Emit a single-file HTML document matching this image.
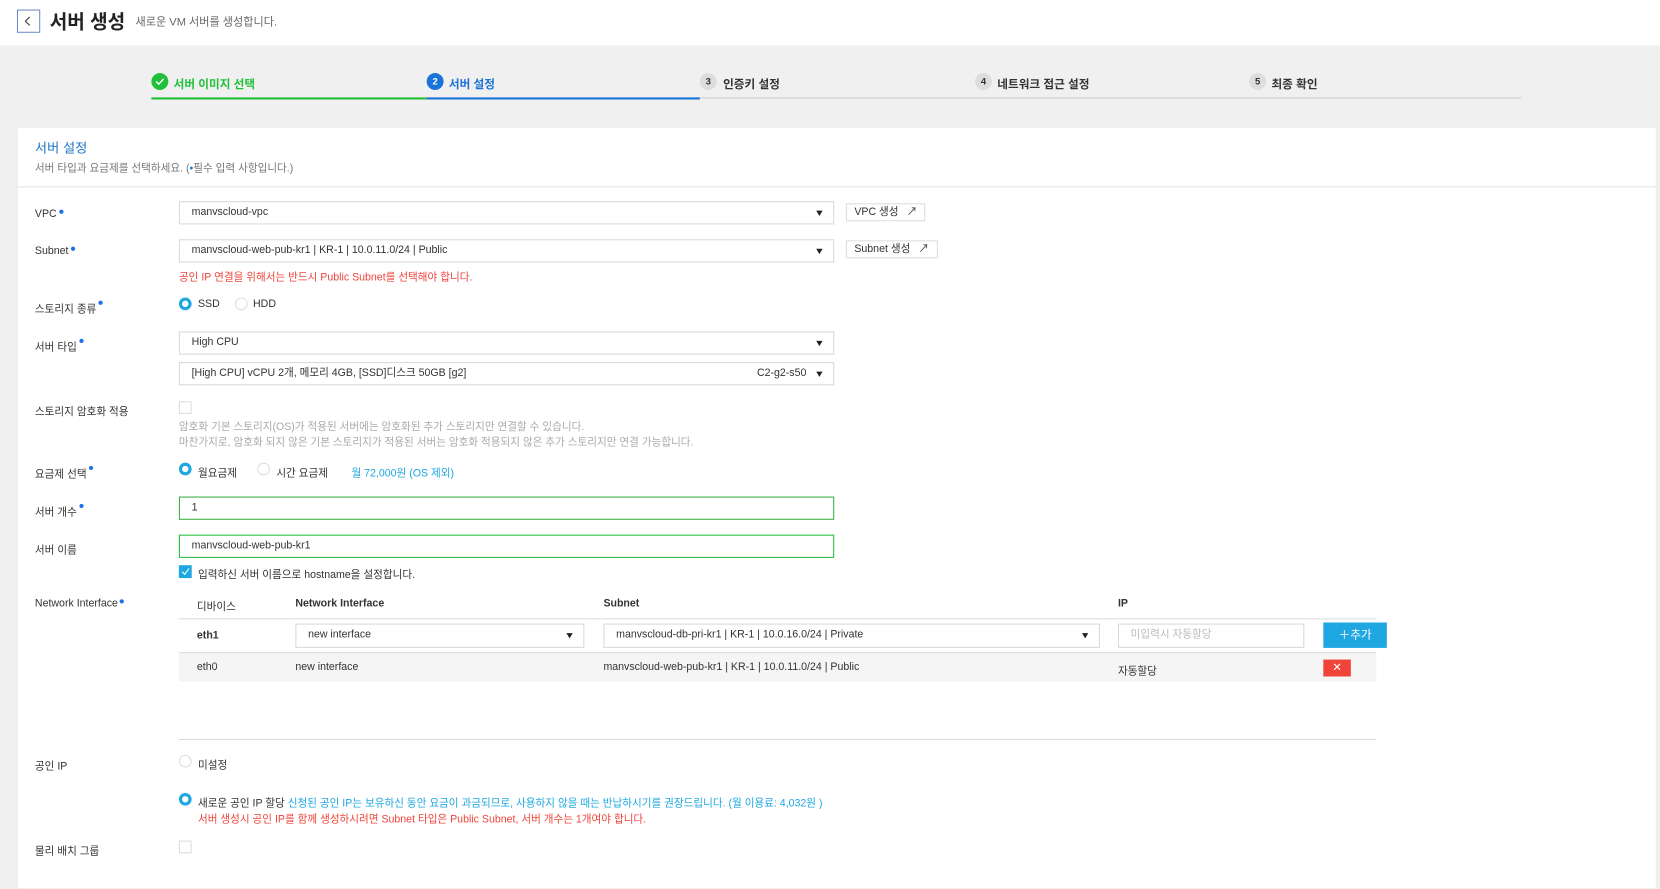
<!DOCTYPE html>
<html><head><meta charset="utf-8"><style>
*{margin:0;padding:0;box-sizing:border-box}
html,body{width:1660px;height:872px;overflow:hidden;background:#f0f0f0}
#w{position:absolute;left:0;top:0;width:1568px;height:824px;transform:scale(1.05867);transform-origin:0 0;font-family:"Liberation Sans","Noto Sans CJK KR",sans-serif;font-size:10px;color:#333}
.a{position:absolute;white-space:nowrap}
.sel{position:absolute;border:1px solid #d9d9d9;background:#fff;height:22px;line-height:20px;padding-left:11px;color:#333}
.sel.ar:after{content:"";position:absolute;right:10px;top:8px;border-left:3.5px solid transparent;border-right:3.5px solid transparent;border-top:5px solid #222}
.dot:after{content:"";display:inline-block;width:4px;height:4px;border-radius:50%;background:#1a73e8;vertical-align:top;margin:1px 0 0 2px}
.rad{position:absolute;width:12px;height:12px;border-radius:50%;border:1px solid #ddd;background:#fff}
.rad.on{border:3.5px solid #1ea7e1}
.chk{position:absolute;width:12px;height:12px;border:1px solid #ddd;background:#fff}
.btn{position:absolute;border:1px solid #ddd;background:#fff;height:17px;line-height:15px;padding-left:7px;font-size:10px}
.circ{position:absolute;width:16px;height:16px;border-radius:50%;background:#ddd;color:#333;font-size:9px;text-align:center;line-height:16px;font-weight:bold}
.st{position:absolute;font-size:11px;font-weight:bold;color:#333}
.lb{position:absolute;left:33px}
</style></head><body><div id="w">
<div class="a" style="left:0;top:0;width:1568px;height:43px;background:#fff"></div>
<div class="a" style="left:16px;top:9px;width:22px;height:22px;border:1px solid #6f8dc6;background:#fff"></div>
<svg class="a" style="left:21px;top:14px" width="12" height="12"><path d="M7 2 L3 6 L7 10" stroke="#333" fill="none" stroke-width="1"/></svg>
<div class="a" style="left:47px;top:7px;font-size:18px;font-weight:bold;color:#222">서버 생성</div>
<div class="a" style="left:128px;top:13px;font-size:10.5px;color:#666">새로운 VM 서버를 생성합니다.</div>

<div class="a" style="left:143px;top:92px;width:1294px;height:1px;background:#ccc"></div>
<div class="a" style="left:143px;top:92px;width:260px;height:2px;background:#22c03a"></div>
<div class="a" style="left:403px;top:92px;width:258px;height:2px;background:#1a73d8"></div>
<div class="circ" style="left:143px;top:69px;background:#22c03a"></div>
<svg class="a" style="left:146px;top:72px" width="10" height="10"><path d="M1.5 5 L4 7.5 L8.5 2.5" stroke="#fff" fill="none" stroke-width="1.3"/></svg>
<div class="st" style="left:164px;top:71px;color:#22c03a">서버 이미지 선택</div>
<div class="circ" style="left:403px;top:69px;background:#1a73d8;color:#fff">2</div>
<div class="st" style="left:424px;top:71px;color:#1a73d8">서버 설정</div>
<div class="circ" style="left:661px;top:69px">3</div>
<div class="st" style="left:683px;top:71px">인증키 설정</div>
<div class="circ" style="left:921px;top:69px">4</div>
<div class="st" style="left:942px;top:71px">네트워크 접근 설정</div>
<div class="circ" style="left:1180px;top:69px">5</div>
<div class="st" style="left:1201px;top:71px">최종 확인</div>

<div class="a" style="left:16px;top:120px;width:1549px;height:720px;background:#fff;border:1px solid #eee"></div>
<div class="a" style="left:33px;top:129px;font-size:12.5px;color:#1a73c8">서버 설정</div>
<div class="a" style="left:33px;top:150px;color:#777">서버 타입과 요금제를 선택하세요. (<span style="color:#1a73e8">•</span>필수 입력 사항입니다.)</div>
<div class="a" style="left:16px;top:176px;width:1549px;height:1px;background:#e3e3e3"></div>

<div class="lb dot" style="top:197px">VPC</div>
<div class="sel ar" style="left:169px;top:190px;width:619px">manvscloud-vpc</div>
<div class="btn" style="left:799px;top:192px;width:75px">VPC 생성 <span style="margin-left:5px">↗</span></div>
<div class="lb dot" style="top:232px">Subnet</div>
<div class="sel ar" style="left:169px;top:226px;width:619px">manvscloud-web-pub-kr1 | KR-1 | 10.0.11.0/24 | Public</div>
<div class="btn" style="left:799px;top:227px;width:87px">Subnet 생성 <span style="margin-left:5px">↗</span></div>
<div class="a" style="left:169px;top:253px;color:#f0433a">공인 IP 연결을 위해서는 반드시 Public Subnet를 선택해야 합니다.</div>

<div class="lb dot" style="top:283px">스토리지 종류</div>
<div class="rad on" style="left:169px;top:281px"></div><div class="a" style="left:187px;top:282px">SSD</div>
<div class="rad" style="left:222px;top:281px"></div><div class="a" style="left:239px;top:282px">HDD</div>

<div class="lb dot" style="top:319px">서버 타입</div>
<div class="sel ar" style="left:169px;top:313px;width:619px">High CPU</div>
<div class="sel ar" style="left:169px;top:342px;width:619px">[High CPU] vCPU 2개, 메모리 4GB, [SSD]디스크 50GB [g2]<span style="position:absolute;left:545px">C2-g2-s50</span></div>

<div class="lb" style="top:380px">스토리지 암호화 적용</div>
<div class="chk" style="left:169px;top:379px"></div>
<div class="a" style="left:169px;top:394px;color:#aaa">암호화 기본 스토리지(OS)가 적용된 서버에는 암호화된 추가 스토리지만 연결할 수 있습니다.</div>
<div class="a" style="left:169px;top:409px;color:#aaa">마찬가지로, 암호화 되지 않은 기본 스토리지가 적용된 서버는 암호화 적용되지 않은 추가 스토리지만 연결 가능합니다.</div>

<div class="lb dot" style="top:439px">요금제 선택</div>
<div class="rad on" style="left:169px;top:437px"></div><div class="a" style="left:187px;top:438px">월요금제</div>
<div class="rad" style="left:243px;top:437px"></div><div class="a" style="left:261px;top:438px">시간 요금제</div>
<div class="a" style="left:332px;top:438px;color:#1ea7e1">월 72,000원 (OS 제외)</div>

<div class="lb dot" style="top:475px">서버 개수</div>
<div class="sel" style="left:169px;top:469px;width:619px;border-color:#3cb043">1</div>
<div class="lb" style="top:511px">서버 이름</div>
<div class="sel" style="left:169px;top:505px;width:619px;border-color:#22c03a">manvscloud-web-pub-kr1</div>
<div class="chk" style="left:169px;top:534px;background:#1ea7e1;border-color:#1ea7e1"></div>
<svg class="a" style="left:170px;top:535px" width="10" height="10"><path d="M2 5 L4.5 7.5 L8.5 2" stroke="#fff" fill="none" stroke-width="1"/></svg>
<div class="a" style="left:187px;top:534px">입력하신 서버 이름으로 hostname을 설정합니다.</div>

<div class="lb dot" style="top:565px">Network Interface</div>
<div class="a" style="left:186px;top:564px">디바이스</div>
<div class="a" style="left:279px;top:565px;font-weight:bold">Network Interface</div>
<div class="a" style="left:570px;top:565px;font-weight:bold">Subnet</div>
<div class="a" style="left:1056px;top:565px;font-weight:bold">IP</div>
<div class="a" style="left:169px;top:584px;width:1131px;height:1px;background:#ddd"></div>
<div class="a" style="left:186px;top:595px;font-weight:bold">eth1</div>
<div class="sel ar" style="left:279px;top:589px;width:273px;height:23px">new interface</div>
<div class="sel ar" style="left:570px;top:589px;width:469px;height:23px">manvscloud-db-pri-kr1 | KR-1 | 10.0.16.0/24 | Private</div>
<div class="sel" style="left:1056px;top:589px;width:176px;height:23px;color:#bbb">미입력시 자동할당</div>
<div class="a" style="left:1250px;top:588px;width:60px;height:24px;background:#1ea7e1;color:#fff;font-size:11px;text-align:center;line-height:24px">＋추가</div>
<div class="a" style="left:169px;top:616px;width:1131px;height:28px;background:#f5f5f5;border-top:1px solid #ddd"></div>
<div class="a" style="left:186px;top:625px">eth0</div>
<div class="a" style="left:279px;top:625px">new interface</div>
<div class="a" style="left:570px;top:625px">manvscloud-web-pub-kr1 | KR-1 | 10.0.11.0/24 | Public</div>
<div class="a" style="left:1056px;top:625px">자동할당</div>
<div class="a" style="left:1250px;top:623px;width:26px;height:16px;background:#f0433a;color:#fff;text-align:center;line-height:16px;font-size:11px">✕</div>
<div class="a" style="left:169px;top:698px;width:1131px;height:1px;background:#ddd"></div>

<div class="lb" style="top:715px">공인 IP</div>
<div class="rad" style="left:169px;top:713px"></div><div class="a" style="left:187px;top:714px">미설정</div>
<div class="rad on" style="left:169px;top:749px"></div>
<div class="a" style="left:187px;top:750px">새로운 공인 IP 할당 <span style="color:#1ea7e1">신청된 공인 IP는 보유하신 동안 요금이 과금되므로, 사용하지 않을 때는 반납하시기를 권장드립니다. (월 이용료: 4,032원 )</span></div>
<div class="a" style="left:187px;top:765px;color:#f0433a">서버 생성시 공인 IP를 함께 생성하시려면 Subnet 타입은 Public Subnet, 서버 개수는 1개여야 합니다.</div>
<div class="lb" style="top:795px">물리 배치 그룹</div>
<div class="chk" style="left:169px;top:794px"></div>
</div></body></html>
